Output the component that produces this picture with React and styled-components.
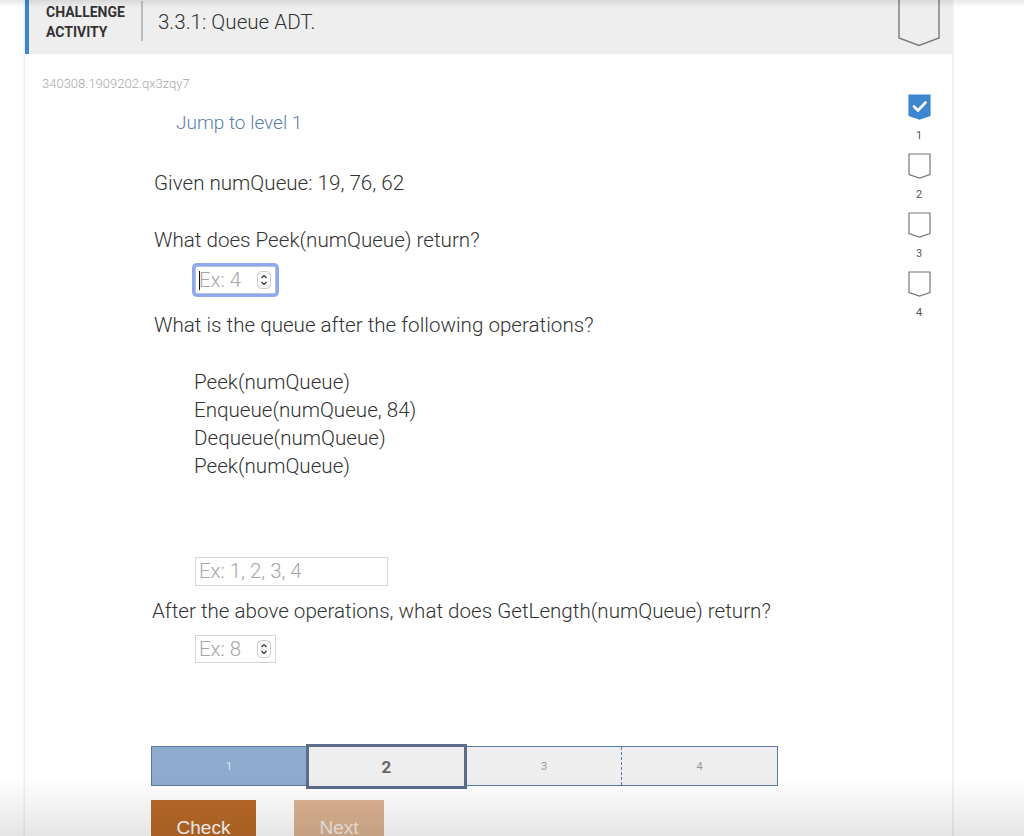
import React from "react";
import styled, { createGlobalStyle } from "styled-components";

const GlobalStyle = createGlobalStyle`
  html, body {
    margin: 0;
    padding: 0;
    background: #ffffff;
    font-family: Roboto, "Liberation Sans", sans-serif;
    color: #333;
    overflow: hidden;
  }
`;

const levels = [1, 2, 3, 4];
const ops = [
  "Peek(numQueue)",
  "Enqueue(numQueue, 84)",
  "Dequeue(numQueue)",
  "Peek(numQueue)",
];

const Shield = ({ filled }) => (
  <svg width="23" height="26" viewBox="0 0 23 26">
    <path
      d="M1 1 H22 V21.5 L11.5 25 L1 21.5 Z"
      fill={filled ? "#3d87d1" : "#fff"}
      stroke={filled ? "#3d87d1" : "#777"}
      strokeWidth="1.2"
    />
    {filled && (
      <path
        d="M6 12.5 L10 16.5 L17.5 8.5"
        fill="none"
        stroke="#fff"
        strokeWidth="2.6"
        strokeLinecap="round"
        strokeLinejoin="round"
      />
    )}
  </svg>
);

const Spinner = () => (
  <svg width="14" height="18" viewBox="0 0 14 18">
    <rect x="0.5" y="0.5" width="13" height="17" rx="4" fill="#fff" stroke="#ccc" />
    <path d="M4.5 7 L7 4.6 L9.5 7" fill="none" stroke="#333" strokeWidth="1.4" />
    <path d="M4.5 11 L7 13.4 L9.5 11" fill="none" stroke="#333" strokeWidth="1.4" />
  </svg>
);

export default function App() {
  return (
    <>
      <GlobalStyle />
      <Card>
        <Header>
          <Label>
            CHALLENGE
            <br />
            ACTIVITY
          </Label>
          <Divider />
          <Title>3.3.1: Queue ADT.</Title>
          <HeaderBadge>
            <svg width="43" height="47" viewBox="0 0 43 47">
              <path
                d="M1 -2 H41 V38 L21 45.5 L1 38 Z"
                fill="none"
                stroke="#7a7a7a"
                strokeWidth="1.4"
              />
            </svg>
          </HeaderBadge>
        </Header>
        <Body>
          <Main>
            <Ident>340308.1909202.qx3zqy7</Ident>
            <JumpLink>Jump to level 1</JumpLink>
            <Questions>
              <Prompt mt={36}>Given numQueue: 19, 76, 62</Prompt>
              <Prompt mt={33}>What does Peek(numQueue) return?</Prompt>
              <NumberBox mt={14} focused>
                <Caret />
                <Placeholder>Ex: 4</Placeholder>
                <Spinner />
              </NumberBox>
              <Prompt mt={19}>What is the queue after the following operations?</Prompt>
              <Code>
                {ops.map((op, i) => (
                  <div key={i}>{op}</div>
                ))}
              </Code>
              <TextBox>Ex: 1, 2, 3, 4</TextBox>
              <Prompt mt={13} shift={-2}>
                After the above operations, what does GetLength(numQueue) return?
              </Prompt>
              <NumberBox mt={12}>
                <Placeholder>Ex: 8</Placeholder>
                <Spinner />
              </NumberBox>
              <Progress>
                {levels.map((n) => (
                  <Segment key={n} state={n === 1 ? "done" : n === 2 ? "current" : "todo"} dashed={n === 4}>
                    {n}
                  </Segment>
                ))}
              </Progress>
              <Buttons>
                <ActionButton>Check</ActionButton>
                <ActionButton disabled>Next</ActionButton>
              </Buttons>
            </Questions>
          </Main>
          <Sidebar>
            {levels.map((n) => (
              <Level key={n}>
                <Shield filled={n === 1} />
                <LevelNum>{n}</LevelNum>
              </Level>
            ))}
          </Sidebar>
        </Body>
      </Card>
      <TopShade />
      <BottomShade />
    </>
  );
}

const Card = styled.div`
  margin-left: 25px;
  width: 927px;
  min-height: 836px;
  background: #fff;
  box-shadow: 0 0 3px rgba(0, 0, 0, 0.18);
`;

const Header = styled.div`
  position: relative;
  display: flex;
  align-items: center;
  height: 54px;
  background: #eeeeee;
  border-left: 4px solid #3c87cf;
  box-sizing: border-box;
`;

const Label = styled.div`
  margin-left: 17px;
  margin-top: -10px;
  font-size: 14px;
  line-height: 20px;
  font-weight: 700;
  color: #333;
`;

const Divider = styled.div`
  width: 2px;
  height: 40px;
  margin: -12px 0 0 16px;
  background: #bbbbbb;
`;

const Title = styled.div`
  margin: -11px 0 0 15px;
  font-size: 20.6px;
  font-weight: 300;
  color: #333;
`;

const HeaderBadge = styled.div`
  position: absolute;
  top: 0;
  right: 11px;
  line-height: 0;
`;

const Body = styled.div`
  display: flex;
`;

const Main = styled.div`
  flex: 1;
  padding-left: 16px;
`;

const Ident = styled.div`
  margin-top: 22px;
  margin-left: 1px;
  font-size: 13px;
  font-weight: 300;
  line-height: 16px;
  color: #a8a8a8;
`;

const JumpLink = styled.div`
  margin: 19px 0 0 135px;
  font-size: 19px;
  font-weight: 300;
  line-height: 24px;
  color: #5a7ea8;
`;

const Questions = styled.div`
  margin-left: 113px;
`;

const Prompt = styled.div`
  margin-top: ${(p) => p.mt || 0}px;
  margin-left: ${(p) => p.shift || 0}px;
  font-size: 20.6px;
  font-weight: 300;
  line-height: 24px;
  color: #333;
`;

const NumberBox = styled.div`
  position: relative;
  display: flex;
  align-items: center;
  justify-content: space-between;
  box-sizing: border-box;
  width: 81px;
  height: 28px;
  margin: ${(p) => p.mt || 0}px 0 0 41px;
  padding: 0 4px 0 3px;
  border: 1px solid ${(p) => (p.focused ? "#b9c3d6" : "#d2d6dc")};
  border-radius: ${(p) => (p.focused ? "2px" : "0")};
  box-shadow: ${(p) => (p.focused ? "0 0 0 3px #8ea8f2" : "none")};
  background: #fff;
`;

const Caret = styled.div`
  position: absolute;
  left: 3px;
  top: 4px;
  width: 1px;
  height: 19px;
  background: #111;
`;

const Placeholder = styled.span`
  font-size: 20.4px;
  font-weight: 300;
  color: #a6a6a6;
`;

const Code = styled.div`
  margin: 31px 0 0 40px;
  font-size: 20.6px;
  font-weight: 300;
  line-height: 28px;
  color: #333;
`;

const TextBox = styled.div`
  box-sizing: border-box;
  width: 193px;
  height: 29px;
  margin: 77px 0 0 41px;
  padding-left: 3px;
  border: 1px solid #d2d6dc;
  font-size: 20.4px;
  font-weight: 300;
  line-height: 27px;
  color: #a6a6a6;
`;

const Progress = styled.div`
  display: grid;
  grid-template-columns: 154fr 161fr 154fr 156fr;
  width: 627px;
  height: 40px;
  margin: 83px 0 0 -3px;
  box-sizing: border-box;
  border: 1px solid #5b7aa3;
`;

const Segment = styled.div`
  display: flex;
  align-items: center;
  justify-content: center;
  font-size: ${(p) => (p.state === "current" ? "17px" : "11px")};
  font-weight: ${(p) => (p.state === "current" ? 700 : 400)};
  color: ${(p) => (p.state === "done" ? "#dfe6f0" : p.state === "current" ? "#666" : "#9a9a9a")};
  background: ${(p) => (p.state === "done" ? "#8eaacd" : "#eeeeee")};
  border-left: ${(p) => (p.dashed ? "1px dashed #5b7aa3" : "none")};
  border: ${(p) => (p.state === "current" ? "3px solid #5c6c8b" : undefined)};
  margin: ${(p) => (p.state === "current" ? "-3px 0 -4px 0" : "0")};
`;

const Buttons = styled.div`
  display: flex;
  gap: 38px;
  margin: 14px 0 0 -3px;
`;

const ActionButton = styled.button`
  height: 50px;
  padding: 6px 0 0;
  width: ${(p) => (p.disabled ? "90px" : "105px")};
  border: none;
  background: ${(p) => (p.disabled ? "#dcb392" : "#bb6a28")};
  color: ${(p) => (p.disabled ? "#f6ede5" : "#fff")};
  font-family: "Liberation Sans", Arial, sans-serif;
  font-size: 19px;
`;

const Sidebar = styled.div`
  width: 66px;
  display: flex;
  flex-direction: column;
  align-items: center;
  padding-top: 40px;
`;

const Level = styled.div`
  display: flex;
  flex-direction: column;
  align-items: center;
  margin-bottom: 10px;
  line-height: 0;
`;

const LevelNum = styled.div`
  margin-top: 8px;
  font-size: 11px;
  line-height: 15px;
  color: #555;
`;

const TopShade = styled.div`
  position: fixed;
  left: 0;
  right: 0;
  top: 0;
  height: 7px;
  background: linear-gradient(rgba(0, 0, 0, 0.09), rgba(0, 0, 0, 0));
  pointer-events: none;
`;

const BottomShade = styled.div`
  position: fixed;
  left: 0;
  right: 0;
  bottom: 0;
  height: 60px;
  background: linear-gradient(rgba(0, 0, 0, 0), rgba(0, 0, 0, 0.1));
  pointer-events: none;
`;
